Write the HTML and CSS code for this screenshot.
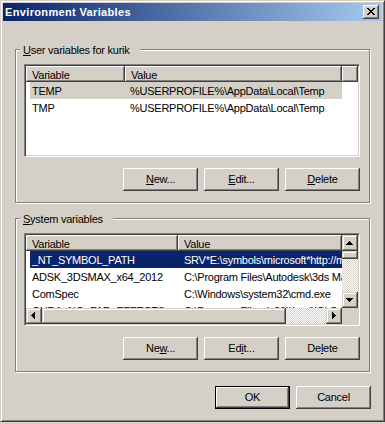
FILE: index.html
```html
<!DOCTYPE html>
<html>
<head>
<meta charset="utf-8">
<title>Environment Variables</title>
<link rel="stylesheet" href="styles.css">
</head>
<body>
<div class="window">
  <div class="titlebar">
    <span class="title">Environment Variables</span>
    <div class="close-btn">
      <svg width="8" height="7" viewBox="0 0 8 7" shape-rendering="crispEdges"><path fill="#000" d="M0 0h2v1H0zM6 0h2v1H6zM1 1h2v1H1zM5 1h2v1H5zM2 2h4v1H2zM3 3h2v1H3zM2 4h4v1H2zM1 5h2v1H1zM5 5h2v1H5zM0 6h2v1H0zM6 6h2v1H6z"/></svg>
    </div>
  </div>
  <div class="client">
    <div class="group">
      <div class="group-label"><u>U</u>ser variables for kurik</div>
      <div class="list">
        <div class="lv-header">
          <div class="hcell u-c1">Variable</div>
          <div class="hcell u-c2">Value</div>
          <div class="hcell filler"></div>
        </div>
        <div class="row inactive"><span class="cell u-r1">TEMP</span><span class="cell u-r2">%USERPROFILE%\AppData\Local\Temp</span></div>
        <div class="row"><span class="cell u-r1">TMP</span><span class="cell u-r2">%USERPROFILE%\AppData\Local\Temp</span></div>
      </div>
      <div class="btn-row">
        <div class="btn"><u>N</u>ew...</div>
        <div class="btn"><u>E</u>dit...</div>
        <div class="btn"><u>D</u>elete</div>
      </div>
    </div>
    <div class="group">
      <div class="group-label"><u>S</u>ystem variables</div>
      <div class="list sys">
        <div class="sys-main">
          <div class="lv-header">
            <div class="hcell s-c1">Variable</div>
            <div class="hcell s-c2">Value</div>
          </div>
          <div class="row wide sel"><span class="cell s-r1">_NT_SYMBOL_PATH</span><span class="cell s-r2">SRV*E:\symbols\microsoft*http://msdl.microsoft.com/download/symbols</span></div>
          <div class="row wide"><span class="cell s-r1">ADSK_3DSMAX_x64_2012</span><span class="cell s-r2">C:\Program Files\Autodesk\3ds Max 2012\</span></div>
          <div class="row wide"><span class="cell s-r1">ComSpec</span><span class="cell s-r2">C:\Windows\system32\cmd.exe</span></div>
          <div class="row wide"><span class="cell s-r1">CUDA_NO_FAR_EFFECTS</span><span class="cell s-r2">C:\Program Files (x86)\Intel\iCLS Client\</span></div>
        </div>
        <div class="vscroll">
          <div class="sb-btn up"><svg width="7" height="4" viewBox="0 0 7 4" shape-rendering="crispEdges"><path d="M3 0h1v1H3zM2 1h3v1H2zM1 2h5v1H1zM0 3h7v1H0z"/></svg></div>
          <div class="sb-thumb v"></div>
          <div class="sb-track"></div>
          <div class="sb-btn down"><svg width="7" height="4" viewBox="0 0 7 4" shape-rendering="crispEdges"><path d="M0 0h7v1H0zM1 1h5v1H1zM2 2h3v1H2zM3 3h1v1H3z"/></svg></div>
        </div>
        <div class="hscroll">
          <div class="sb-btn left"><svg width="4" height="7" viewBox="0 0 4 7" shape-rendering="crispEdges"><path d="M0 3h1v1H0zM1 2h1v3H1zM2 1h1v5H2zM3 0h1v7H3z"/></svg></div>
          <div class="sb-thumb h"></div>
          <div class="sb-track"></div>
          <div class="sb-btn right"><svg width="4" height="7" viewBox="0 0 4 7" shape-rendering="crispEdges"><path d="M0 0h1v7H0zM1 1h1v5H1zM2 2h1v3H2zM3 3h1v1H3z"/></svg></div>
        </div>
        <div class="corner"></div>
      </div>
      <div class="btn-row">
        <div class="btn">Ne<u>w</u>...</div>
        <div class="btn">Ed<u>i</u>t...</div>
        <div class="btn">De<u>l</u>ete</div>
      </div>
    </div>
    <div class="footer">
      <div class="btn default">OK</div>
      <div class="btn">Cancel</div>
    </div>
  </div>
</div>
</body>
</html>
```

FILE: styles.css
```css
* { box-sizing: border-box; }

html, body { margin: 0; padding: 0; }

body {
  width: 385px;
  height: 424px;
  overflow: hidden;
  background: #d4d0c8;
  font-family: "Liberation Sans", Arial, sans-serif;
  font-size: 11px;
  letter-spacing: -0.25px;
  color: #000;
}

.window {
  width: 385px;
  height: 422px;
  background: #d4d0c8;
  border: 1px solid;
  border-color: #d4d0c8 #404040 #404040 #d4d0c8;
  box-shadow: inset 1px 1px 0 #fff, inset -1px -1px 0 #808080;
  padding: 2px;
  display: flex;
  flex-direction: column;
}

.titlebar {
  flex: none;
  height: 18px;
  display: flex;
  align-items: center;
  justify-content: space-between;
  padding: 0 3px 0 2px;
  background: linear-gradient(to right, #0a246a, #a6caf0);
}

.title {
  color: #fff;
  font-weight: bold;
  line-height: 18px;
  letter-spacing: 0.35px;
}

.close-btn {
  width: 16px;
  height: 14px;
  padding: 3px 0 0 4px;
  background: #d4d0c8;
  box-shadow: inset -1px -1px 0 #404040, inset 1px 1px 0 #fff, inset -2px -2px 0 #808080;
}

.close-btn svg { display: block; }

.client {
  flex: 1;
  display: flex;
  flex-direction: column;
  padding: 28px 0 0 12px;
}

.group {
  position: relative;
  flex: none;
  width: 355px;
  height: 154px;
  border: 1px solid #808080;
  box-shadow: 1px 1px 0 #fff, inset 1px 1px 0 #fff;
  padding: 14px 9px 11px 8px;
  display: flex;
  flex-direction: column;
}

.group + .group { margin-top: 15px; }

.group-label {
  position: absolute;
  top: -6px;
  left: 4px;
  padding: 0 10px 0 3px;
  line-height: 13px;
  background: #d4d0c8;
  white-space: nowrap;
}

.list {
  flex: none;
  width: 336px;
  height: 93px;
  background: #fff;
  border: 1px solid;
  border-color: #808080 #fff #fff #808080;
  box-shadow: inset 1px 1px 0 #404040, inset -1px -1px 0 #d4d0c8;
  padding: 1px;
  overflow: hidden;
}

.lv-header {
  display: flex;
  height: 16px;
}

.hcell {
  flex: none;
  height: 16px;
  padding: 2px 0 0 6px;
  line-height: 14px;
  background: #d4d0c8;
  box-shadow: inset -1px -1px 0 #404040, inset 1px 1px 0 #fff, inset -2px -2px 0 #808080;
  white-space: nowrap;
  overflow: hidden;
}

.hcell.filler { flex: 1; }

.u-c1 { width: 99px; }
.u-c2 { width: 217px; }
.s-c1 { width: 152px; }
.s-c2 { flex: 1; }

.row {
  display: flex;
  height: 17px;
  margin-left: 4px;
  width: 312px;
  padding-top: 1px;
  line-height: 16px;
  white-space: nowrap;
}

.row.wide { width: 600px; }

.row.inactive { background: #d4d0c8; }

.row.sel {
  background: #0a246a;
  color: #fff;
}

.cell {
  flex: none;
  overflow: hidden;
}

.u-r1 { width: 95px; padding-left: 2px; }
.u-r2 { width: 217px; padding-left: 5px; }
.s-r1 { width: 148px; padding-left: 2px; }
.s-r2 { flex: 1; padding-left: 6px; }

.list.sys {
  display: grid;
  grid-template-columns: 316px 16px;
  grid-template-rows: 73px 16px;
}

.sys-main { overflow: hidden; }

.vscroll {
  display: flex;
  flex-direction: column;
}

.hscroll { display: flex; }

.sb-btn {
  flex: none;
  width: 16px;
  height: 16px;
  background: #d4d0c8;
  box-shadow: inset -1px -1px 0 #404040, inset 1px 1px 0 #d4d0c8, inset -2px -2px 0 #808080, inset 2px 2px 0 #fff;
}

.sb-btn svg { display: block; }

.sb-btn.up { padding: 6px 0 0 4px; }
.sb-btn.down { padding: 6px 0 0 4px; }
.sb-btn.left { padding: 4px 0 0 5px; }
.sb-btn.right { padding: 4px 0 0 6px; }

.sb-thumb {
  flex: none;
  background: #d4d0c8;
  box-shadow: inset -1px -1px 0 #404040, inset 1px 1px 0 #d4d0c8, inset -2px -2px 0 #808080, inset 2px 2px 0 #fff;
}

.sb-thumb.v { height: 8px; }
.sb-thumb.h { width: 244px; }

.sb-track {
  flex: 1;
  background-color: #fff;
  background-image: conic-gradient(#d4d0c8 25%, #fff 0 50%, #d4d0c8 0 75%, #fff 0);
  background-size: 2px 2px;
}

.corner { background: #d4d0c8; }

.btn-row {
  display: flex;
  justify-content: flex-end;
  gap: 6px;
  margin-top: 11px;
}

.btn {
  flex: none;
  width: 75px;
  height: 23px;
  line-height: 23px;
  text-align: center;
  background: #d4d0c8;
  box-shadow: inset -1px -1px 0 #404040, inset 1px 1px 0 #fff, inset -2px -2px 0 #808080;
  white-space: nowrap;
}

.btn.default {
  border: 1px solid #000;
  line-height: 21px;
}

.footer {
  display: flex;
  justify-content: flex-end;
  gap: 6px;
  width: 356px;
  margin-top: 14px;
}
```
